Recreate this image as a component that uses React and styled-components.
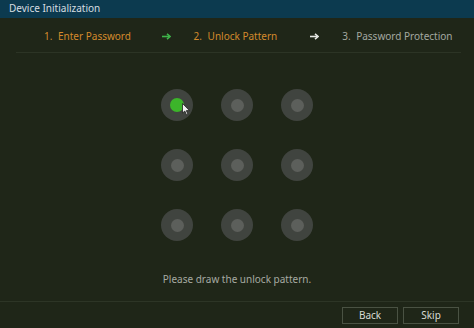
import React from "react";
import styled, { createGlobalStyle } from "styled-components";

const Global = createGlobalStyle`
  html, body {
    margin: 0;
    padding: 0;
    background: #1f2618;
  }
  body {
    font-family: "Noto Sans", "Open Sans", sans-serif;
  }
`;

const Window = styled("div")`
  width: 474px;
  height: 328px;
  display: flex;
  flex-direction: column;
  background: #1f2618;
  overflow: hidden;
`;

const TitleBar = styled("div")`
  height: 18px;
  background: #0c3a4f;
  color: #d6dde0;
  font-size: 10px;
  line-height: 17px;
  padding-left: 9px;
`;

const Steps = styled("div")`
  height: 32px;
  margin: 0 13px 0 16px;
  border-bottom: 1px solid #2c3425;
  display: flex;
  align-items: center;
  padding-left: 28px;
  font-size: 10px;
  padding-top: 2px;
`;

const Step = styled("div")`
  display: flex;
  color: ${(p) => (p.$active ? "#d38a2c" : "#a3a8a0")};
  width: ${(p) => p.$w}px;
`;

const Num = styled("span")`
  width: 14px;
`;

const ArrowBox = styled("div")`
  width: 32px;
  display: flex;
  align-items: center;
`;

const Pattern = styled("div")`
  margin: 22px auto 0;
  display: grid;
  grid-template-columns: repeat(3, 60px);
  grid-template-rows: repeat(3, 60px);
`;

const Cell = styled("div")`
  display: flex;
  align-items: center;
  justify-content: center;
  position: relative;
`;

const Ring = styled("div")`
  width: 32px;
  height: 32px;
  border-radius: 50%;
  background: #40443f;
  display: flex;
  align-items: center;
  justify-content: center;
`;

const Dot = styled("div")`
  width: ${(p) => (p.$on ? 14 : 13)}px;
  height: ${(p) => (p.$on ? 14 : 13)}px;
  border-radius: 50%;
  background: ${(p) => (p.$on ? "#3cb52a" : "#5c5f5b")};
`;

const Cursor = styled("svg")`
  position: absolute;
  left: 35px;
  top: 28px;
`;

const Hint = styled("div")`
  margin-top: 17px;
  text-align: center;
  color: #a6aaa2;
  font-size: 10px;
`;

const Footer = styled("div")`
  margin-top: auto;
  height: 26px;
  border-top: 1px solid #2d3526;
  display: flex;
  justify-content: flex-end;
  align-items: center;
  gap: 5px;
  padding-right: 15px;
`;

const Button = styled("button")`
  width: 56px;
  height: 17px;
  padding: 0;
  background: #1f2618;
  border: 1px solid #4a5243;
  color: #d8dcd4;
  font-family: inherit;
  font-size: 10px;
  line-height: 15px;
`;

const Arrow = ({ color }) => (
  <ArrowBox>
    <svg width="9" height="7" viewBox="0 0 9 7">
      <path d="M0 3.5 H7" stroke={color} strokeWidth="1.6" />
      <path d="M5 0.8 L8.2 3.5 L5 6.2" fill="none" stroke={color} strokeWidth="1.6" />
    </svg>
  </ArrowBox>
);

export default function App() {
  return (
    <Window>
      <Global />
      <TitleBar>Device Initialization</TitleBar>
      <Steps>
        <Step $active $w={119}>
          <Num>1.</Num>Enter Password
        </Step>
        <Arrow color="#3fb54a" />
        <Step $active $w={118}>
          <Num>2.</Num>Unlock Pattern
        </Step>
        <Arrow color="#e6e8e4" />
        <Step $w={120}>
          <Num>3.</Num>Password Protection
        </Step>
      </Steps>
      <Pattern>
        {Array.from({ length: 9 }).map((_, i) => (
          <Cell key={i}>
            <Ring>
              <Dot $on={i === 0} />
            </Ring>
            {i === 0 && (
              <Cursor width="9" height="13" viewBox="0 0 9 13">
                <path
                  d="M0.5 0.5 L0.5 10 L2.8 8 L4.6 12 L6 11.4 L4.3 7.6 L7.5 7.6 Z"
                  fill="#f2f2f2"
                  stroke="#222"
                  strokeWidth="0.8"
                />
              </Cursor>
            )}
          </Cell>
        ))}
      </Pattern>
      <Hint>Please draw the unlock pattern.</Hint>
      <Footer>
        <Button>Back</Button>
        <Button>Skip</Button>
      </Footer>
    </Window>
  );
}
